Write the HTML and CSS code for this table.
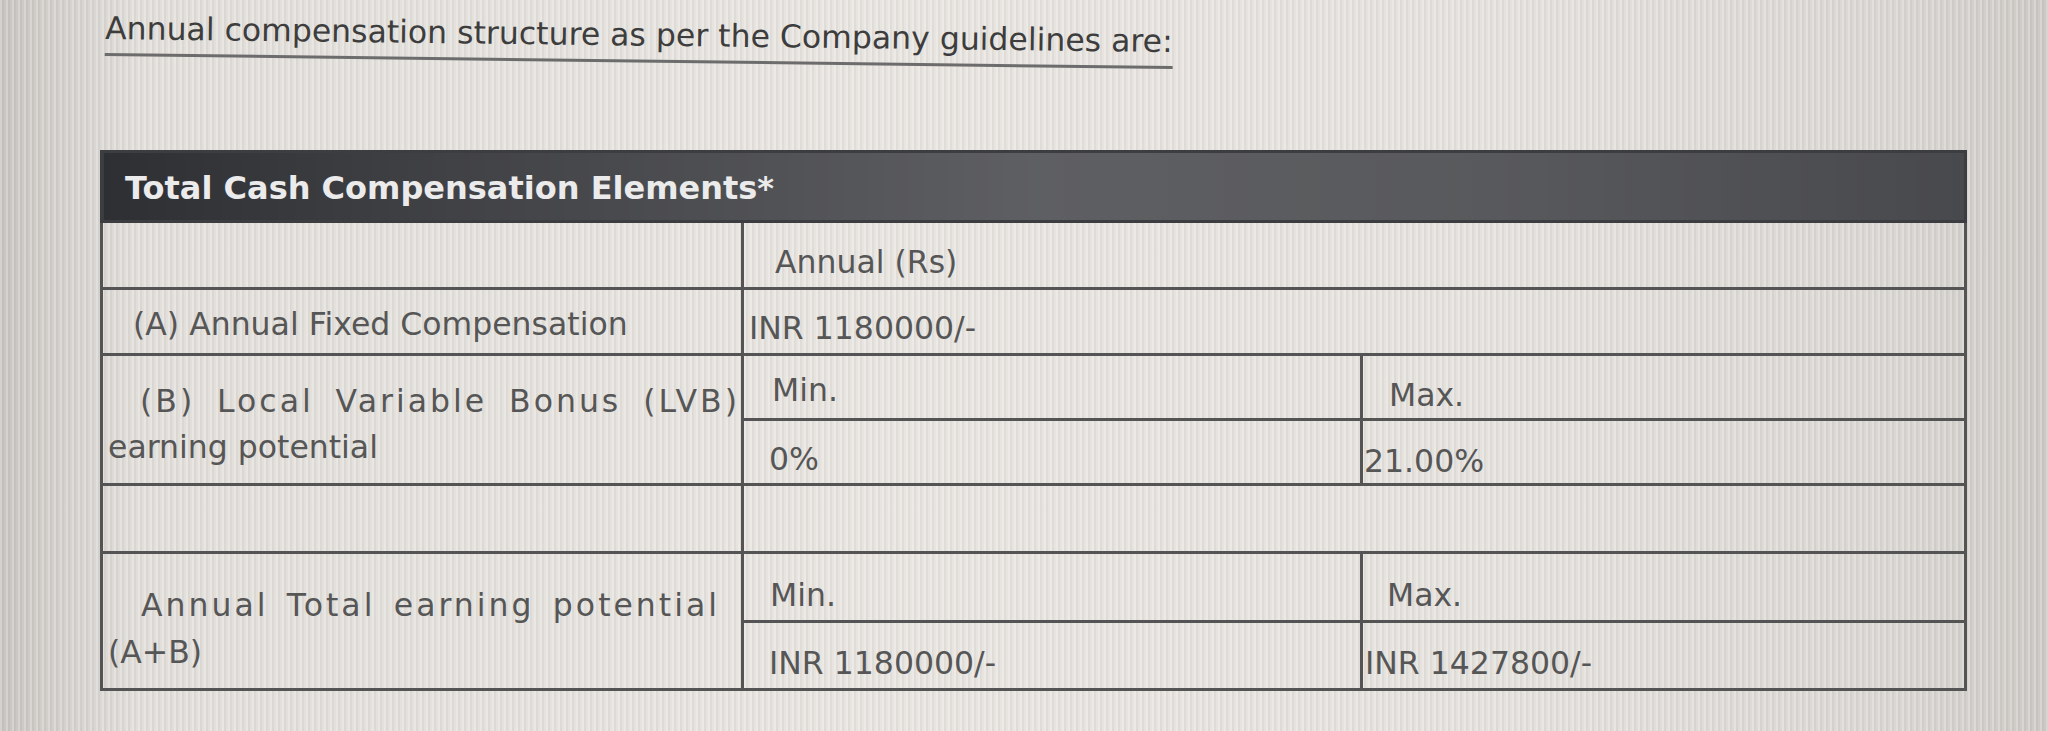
FILE: index.html
```html
<!DOCTYPE html>
<html lang="en">
<head>
<meta charset="utf-8">
<title>Annual compensation structure</title>
<link rel="stylesheet" href="styles.css">
</head>
<body>
<div class="page">
  <p class="intro"><span class="intro-text">Annual compensation structure as per the Company guidelines are:</span></p>
  <table class="comp">
    <colgroup><col class="c1"><col class="c2"><col class="c3"></colgroup>
    <thead>
      <tr class="r-head"><th colspan="3">Total Cash Compensation Elements*</th></tr>
    </thead>
    <tbody>
      <tr class="r1"><td class="blank"></td><td colspan="2" class="val p-annual">Annual (Rs)</td></tr>
      <tr class="r2"><td class="label label-a">(A) Annual Fixed Compensation</td><td colspan="2" class="val p-inr">INR 1180000/-</td></tr>
      <tr class="r3a">
        <td rowspan="2" class="label label-b"><span class="jline ind-b">(B) Local Variable Bonus (LVB)</span><span class="line">earning potential</span></td>
        <td class="val p-min">Min.</td>
        <td class="val p-max">Max.</td>
      </tr>
      <tr class="r3b"><td class="val p-zero">0%</td><td class="val p-pct">21.00%</td></tr>
      <tr class="r4"><td class="blank"></td><td colspan="2" class="blank"></td></tr>
      <tr class="r5a">
        <td rowspan="2" class="label label-t"><span class="jline ind-t">Annual Total earning potential</span><span class="line">(A+B)</span></td>
        <td class="val p-min2">Min.</td>
        <td class="val p-max2">Max.</td>
      </tr>
      <tr class="r5b"><td class="val p-inr2">INR 1180000/-</td><td class="val p-inr3">INR 1427800/-</td></tr>
    </tbody>
  </table>
</div>
</body>
</html>
```
FILE: styles.css
```css
html, body {
  margin: 0;
  padding: 0;
}

body {
  width: 2048px;
  height: 731px;
  overflow: hidden;
  font-family: "DejaVu Sans", Verdana, sans-serif;
  background-color: #e2dfdb;
  background-image:
    repeating-linear-gradient(90deg, rgba(255,255,255,0.20) 0 2px, rgba(0,0,0,0.035) 2px 4px, rgba(0,0,0,0) 4px 6px),
    linear-gradient(90deg, #c9c6c2 0, #d4d1cd 60px, #e2dfdb 140px, #e8e5e1 900px, #e5e2de 1500px, #dad7d3 1900px, #cdcac6 2048px);
}

.page {
  padding: 8px 0 0 100px;
}

.intro {
  margin: 0 0 0 5px;
  height: 49px;
}

.intro-text {
  display: inline-block;
  font-size: 31.5px;
  line-height: 40px;
  color: #3d3d3d;
  padding-bottom: 5px;
  border-bottom: 3px solid #6c6c6c;
  transform: rotate(0.7deg);
  transform-origin: 0 50%;
}

.comp {
  margin-top: 93px;
  border-collapse: collapse;
  table-layout: fixed;
  width: 1864px;
  font-size: 31.5px;
  color: #565656;
}

.c1 { width: 641px; }
.c2 { width: 619px; }
.c3 { width: 604px; }

.comp .r-head th {
  height: 70px;
  padding: 0 0 13px 22px;
  box-sizing: border-box;
  text-align: left;
  vertical-align: bottom;
  font-size: 32px;
  font-weight: bold;
  line-height: 38px;
  color: #ebebeb;
  border: 3px solid #3c3d41;
  background: linear-gradient(90deg, #2e2f33 0, #404145 18%, #5e5f62 50%, #58595c 75%, #48494d 100%);
}

.comp td {
  border: 3px solid #545454;
  padding: 0;
  line-height: 36px;
  white-space: nowrap;
}

.r1 { height: 67px; }
.r2 { height: 66px; }
.r3a { height: 65px; }
.r3b { height: 65px; }
.r4 { height: 68px; }
.r5a { height: 69px; }
.r5b { height: 68px; }

.comp td.val {
  vertical-align: bottom;
  padding-bottom: 7px;
}

.comp td.p-annual { padding-left: 31px; }
.comp td.p-inr { padding-left: 5px; }
.comp td.p-min { padding-left: 28px; padding-bottom: 10px; }
.comp td.p-max { padding-left: 26px; padding-bottom: 5px; }
.comp td.p-zero { padding-left: 25px; padding-bottom: 6px; }
.comp td.p-pct { padding-left: 1px; padding-bottom: 4px; }
.comp td.p-min2 { padding-left: 26px; }
.comp td.p-max2 { padding-left: 24px; }
.comp td.p-inr2 { padding-left: 25px; }
.comp td.p-inr3 { padding-left: 2px; }

.comp td.label {
  vertical-align: bottom;
}

.comp td.label-a {
  padding: 0 0 11px 30px;
}

.comp td.label-b {
  padding: 0 1px 13px 5px;
  line-height: 46px;
}

.comp td.label-t {
  padding: 0 21px 12px 5px;
  line-height: 47px;
}

.jline {
  display: block;
  text-align: justify;
  text-align-last: justify;
  white-space: normal;
  letter-spacing: 3px;
}

.ind-b { margin-left: 32px; }
.ind-t { margin-left: 33px; }

.line {
  display: block;
}
```
